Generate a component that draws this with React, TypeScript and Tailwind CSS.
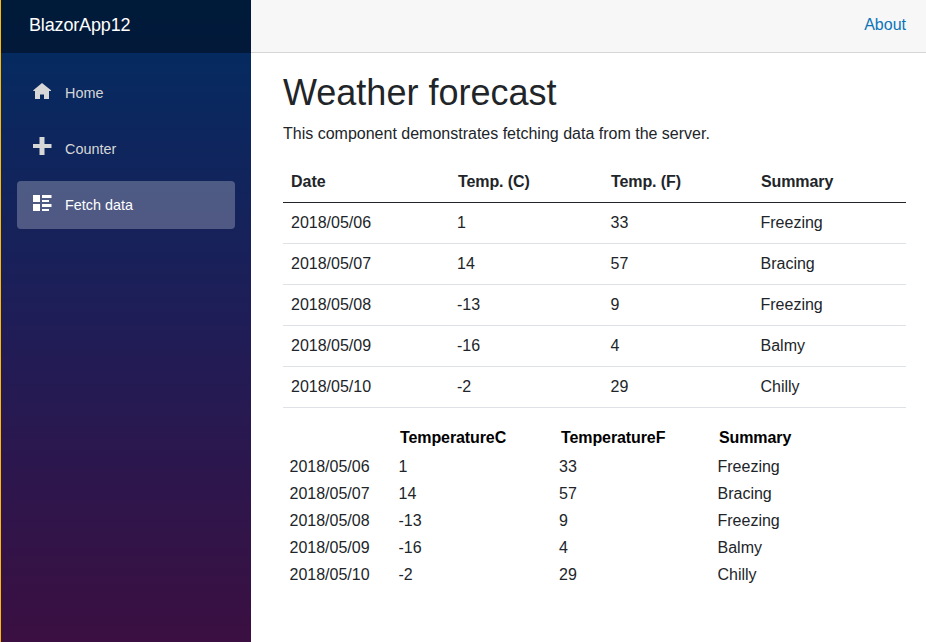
const forecasts = [
  { date: '2018/05/06', c: 1, f: 33, summary: 'Freezing' },
  { date: '2018/05/07', c: 14, f: 57, summary: 'Bracing' },
  { date: '2018/05/08', c: -13, f: 9, summary: 'Freezing' },
  { date: '2018/05/09', c: -16, f: 4, summary: 'Balmy' },
  { date: '2018/05/10', c: -2, f: 29, summary: 'Chilly' },
]

const HomeIcon = () => (
  <svg width="20" height="18" viewBox="0 0 20 18" fill="currentColor">
    <path d="M9 1 L18 8.2 V9 H16 V17 H11 V12.5 H7 V17 H2 V9 H0.3 V8.2 Z" />
  </svg>
)

const PlusIcon = () => (
  <svg
    className="mb-0.5"
    width="20"
    height="18"
    viewBox="0 0 20 18"
    fill="currentColor"
  >
    <path d="M6.5 0 H11.5 V7 H18.5 V11 H11.5 V18 H6.5 V11 H0 V7 H6.5 Z" />
  </svg>
)

const ListIcon = () => (
  <svg width="20" height="18" viewBox="0 0 20 18" fill="currentColor">
    <path d="M0 1 H7 V8 H0 Z M0 10 H7 V17 H0 Z M9 1 H18.5 V4 H9 Z M9 6 H16 V8 H9 Z M9 10 H18.5 V13 H9 Z M9 15 H16 V17 H9 Z" />
  </svg>
)

const links = [
  { label: 'Home', icon: <HomeIcon />, active: false },
  { label: 'Counter', icon: <PlusIcon />, active: false },
  { label: 'Fetch data', icon: <ListIcon />, active: true },
]

const Sidebar = () => (
  <aside className="w-[251px] shrink-0 border-l border-[#ffb900] bg-linear-to-b/srgb from-[#002d62] via-[#1f1d57] to-[#3b0f41]">
    <div className="flex h-[53px] items-center bg-black/40 pb-[3px] pl-7">
      <a className="text-lg tracking-[-0.15px] text-white">BlazorApp12</a>
    </div>
    <nav className="flex flex-col gap-2 px-4 pt-4">
      {links.map(({ label, icon, active }) => (
        <a
          key={label}
          className={
            active
              ? 'flex h-12 items-center rounded bg-white/25 pl-4 text-[14.4px] text-white'
              : 'flex h-12 items-center rounded pl-4 text-[14.4px] text-[#d7d7d7]'
          }
        >
          <span className="w-8 pb-[5px]">{icon}</span>
          <span className="pt-0.5">{label}</span>
        </a>
      ))}
    </nav>
  </aside>
)

const App = () => {
  return (
    <div className="flex h-screen overflow-hidden bg-white font-['Liberation_Sans',Arial,sans-serif] text-base text-[#212529]">
      <Sidebar />
      <main className="flex-1">
        <div className="flex h-[53px] items-center justify-end border-b border-[#d6d5d5] bg-[#f7f7f7] pr-5 pb-[3px]">
          <a className="text-[#0b74b9]">About</a>
        </div>

        <div className="pr-5 pl-8">
          <h1 className="pt-[18px] text-[36px] leading-[43px]">
            Weather forecast
          </h1>
          <p className="pt-2 leading-6">
            This component demonstrates fetching data from the server.
          </p>

          <table className="mt-[15px] w-full table-fixed border-collapse text-left">
            <thead>
              <tr className="h-[41px] border-b border-[#212529]">
                <th className="w-[167px] px-2 pt-0.5">Date</th>
                <th className="w-[153px] px-2 pt-0.5 tracking-[-0.1px]">
                  Temp. (C)
                </th>
                <th className="w-[150px] px-2 pt-0.5 tracking-[-0.1px]">
                  Temp. (F)
                </th>
                <th className="px-2 pt-0.5 tracking-[-0.1px]">Summary</th>
              </tr>
            </thead>
            <tbody>
              {forecasts.map(({ date, c, f, summary }) => (
                <tr key={date} className="h-[41px] border-b border-[#dee2e6]">
                  <td className="px-2">{date}</td>
                  <td className="px-[7px]">{c}</td>
                  <td className="px-[7.5px]">{f}</td>
                  <td className="px-[7.5px]">{summary}</td>
                </tr>
              ))}
            </tbody>
          </table>

          <table className="mt-[15px] w-full table-fixed text-left">
            <thead>
              <tr className="h-[31px] tracking-[-0.1px] text-black">
                <th className="w-[115px]"></th>
                <th className="w-[160px] pl-0.5">TemperatureC</th>
                <th className="w-[159px] pl-[3px]">TemperatureF</th>
                <th className="pl-0.5">Summary</th>
              </tr>
            </thead>
            <tbody>
              {forecasts.map(({ date, c, f, summary }) => (
                <tr key={date} className="h-[27px]">
                  <td className="pl-[6.5px]">{date}</td>
                  <td className="pl-[0.5px]">{c}</td>
                  <td className="pl-px">{f}</td>
                  <td className="pl-[0.5px]">{summary}</td>
                </tr>
              ))}
            </tbody>
          </table>
        </div>
      </main>
    </div>
  )
}

export default App
